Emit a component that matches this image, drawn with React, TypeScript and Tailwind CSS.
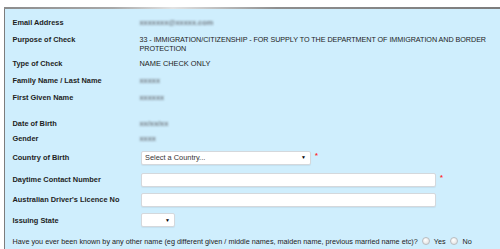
const font = { fontFamily: '"Liberation Sans", Arial, sans-serif' };

function Blurred({ text }: { text: string }) {
  return (
    <span className="inline-block whitespace-nowrap font-bold text-[#737a82] blur-[0.9px]">
      {text}
    </span>
  );
}

function Row({
  label,
  h,
  children,
  top = false,
}: {
  label: string;
  h: string;
  children?: React.ReactNode;
  top?: boolean;
}) {
  return (
    <div className={`flex ${h} ${top ? 'items-start pt-[4px]' : 'items-center'}`}>
      <div className="w-[127px] shrink-0 font-bold text-[#1e1e1e]">{label}</div>
      <div className="flex min-w-0 items-center">{children}</div>
    </div>
  );
}

function FakeSelect({ w, placeholder }: { w: string; placeholder?: string }) {
  return (
    <div
      className={`ml-[1.5px] flex h-[14px] ${w} items-center justify-between rounded-[2px] border border-[#d4d8dc] bg-white pl-[3px] pr-[4px] text-[#333] shadow-[0_1px_1px_rgba(0,0,0,0.06)]`}
    >
      <span>{placeholder ?? ''}</span>
      <span className="text-[5px] leading-none text-black">▼</span>
    </div>
  );
}

function TextBox() {
  return (
    <div className="ml-[1.5px] h-[14px] w-[295px] rounded-[2px] border border-[#d4d8dc] bg-white shadow-[0_1px_1px_rgba(0,0,0,0.06)]" />
  );
}

function Star() {
  return <span className="ml-[4px] -mt-[4px] font-bold text-[#ff2a2a]">*</span>;
}

function Radio() {
  return (
    <span className="inline-block h-[8px] w-[8px] rounded-full border border-[#b9bcc0] bg-[radial-gradient(circle_at_40%_35%,#ffffff,#dcdcdc)]" />
  );
}

export default function App() {
  return (
    <div className="h-[249px] w-[500px] overflow-hidden bg-white text-[7.4px] leading-[9px]" style={font}>
      <div className="h-[7px] bg-white" />
      <div className="ml-[4px] h-[2px] bg-[linear-gradient(90deg,#8c8c8c_0%,#a8a8a8_22%,#e2e2e2_34%,#8e8e8e_55%,#7c7c7c_100%)]" />
      <div className="ml-[3.5px] h-[240px] border-l-[1.5px] border-[#7d7d7d] bg-[#cfeefd] pl-[8px] pt-[4.5px] text-[#222]">
        <Row label="Email Address" h="h-[17px]">
          <Blurred text="xxxxxxx@xxxxx.com" />
        </Row>
        <Row label="Purpose of Check" h="h-[25px]" top>
          <div className="whitespace-nowrap text-[7.2px] tracking-[-0.05px]">
            33 - IMMIGRATION/CITIZENSHIP - FOR SUPPLY TO THE DEPARTMENT OF IMMIGRATION AND BORDER
            <br />
            PROTECTION
          </div>
        </Row>
        <Row label="Type of Check" h="h-[16px]">
          NAME CHECK ONLY
        </Row>
        <Row label="Family Name / Last Name" h="h-[17px]">
          <Blurred text="xxxxx" />
        </Row>
        <Row label="First Given Name" h="h-[17px]">
          <Blurred text="xxxxxx" />
        </Row>
        <div className="h-[9px]" />
        <Row label="Date of Birth" h="h-[17px]">
          <Blurred text="xx/xx/xx" />
        </Row>
        <Row label="Gender" h="h-[14px]">
          <Blurred text="xxxx" />
        </Row>
        <Row label="Country of Birth" h="h-[24px]">
          <FakeSelect w="w-[170px]" placeholder="Select a Country..." />
          <Star />
        </Row>
        <Row label="Daytime Contact Number" h="h-[20px]">
          <TextBox />
          <Star />
        </Row>
        <Row label="Australian Driver's Licence No" h="h-[20px]">
          <TextBox />
        </Row>
        <Row label="Issuing State" h="h-[21px]">
          <FakeSelect w="w-[34px]" />
        </Row>
        <div className="flex h-[21px] items-center whitespace-nowrap text-[7.25px] text-[#222]">
          <span>
            Have you ever been known by any other name (eg different given / middle names, maiden name, previous married name etc)?
          </span>
          <span className="ml-[4px] flex items-center">
            <Radio />
          </span>
          <span className="ml-[4px]">Yes</span>
          <span className="ml-[4px] flex items-center">
            <Radio />
          </span>
          <span className="ml-[5px]">No</span>
        </div>
      </div>
    </div>
  );
}
